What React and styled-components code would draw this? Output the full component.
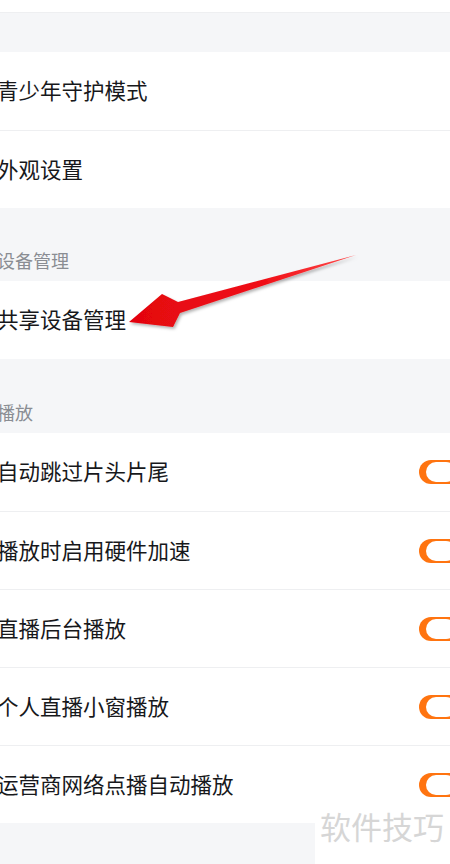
import React from "react"
import styled, { createGlobalStyle } from "styled-components"

const GlobalStyle = createGlobalStyle`
	html, body {
		margin: 0;
		padding: 0;
		background: #f5f6f8;
	}
	body {
		font-family: "Noto Sans CJK SC", "Noto Sans", sans-serif;
		overflow: hidden;
	}
`

const Page = styled.div`
	position: relative;
	width: 450px;
	height: 864px;
	overflow: hidden;
	background: #f5f6f8;
`

const TopStub = styled.div`
	height: 13px;
	background: #fff;
	border-bottom: 1px solid #eeeff1;
	box-sizing: border-box;
`

const Gap = styled.div`
	height: ${p => p.h}px;
`

const SectionHeader = styled.div`
	height: ${p => p.h}px;
	box-sizing: border-box;
	display: flex;
	align-items: flex-end;
	padding-bottom: 8px;
	margin-left: -3px;
	font-size: 18px;
	color: #8a8d93;
`

const Group = styled.div`
	background: #fff;
`

const Row = styled.div`
	height: 78px;
	box-sizing: border-box;
	display: flex;
	align-items: center;
	justify-content: space-between;
	padding-bottom: 3px;
	border-top: ${p => (p.first ? "none" : "1px solid #eeeff1")};
`

const Label = styled.span`
	margin-left: -3px;
	font-size: 21.5px;
	color: #17181b;
`

const Toggle = styled.div`
	position: relative;
	flex: none;
	width: 48px;
	height: 24px;
	margin-right: -17px;
	margin-top: 3px;
	border-radius: 12px;
	background: #ff7410;

	&::after {
		content: "";
		position: absolute;
		top: 2px;
		left: 7px;
		width: 30px;
		height: 20px;
		border-radius: 10px;
		background: #fff;
	}
`

const Arrow = styled.svg`
	position: absolute;
	left: 0;
	top: 0;
	pointer-events: none;
`

const Watermark = styled.div`
	position: absolute;
	left: 315px;
	top: 811px;
	width: 135px;
	height: 53px;
	box-sizing: border-box;
	padding-left: 5px;
	font-size: 31px;
	line-height: 30px;
	color: #d6d6d6;
	background: linear-gradient(#fff0 0, #fff0 9px, #fff 9px);
`

const Item = ({ label, toggle, first }) => (
	<Row first={first}>
		<Label>{label}</Label>
		{toggle && <Toggle />}
	</Row>
)

const playItems = [
	"自动跳过片头片尾",
	"播放时启用硬件加速",
	"直播后台播放",
	"个人直播小窗播放",
	"运营商网络点播自动播放",
]

export default function App() {
	return (
		<Page>
			<GlobalStyle />
			<TopStub />
			<Gap h={39} />
			<Group>
				<Item first label="青少年守护模式" />
				<Item label="外观设置" />
			</Group>
			<SectionHeader h={73}>设备管理</SectionHeader>
			<Group>
				<Item first label="共享设备管理" />
			</Group>
			<SectionHeader h={74}>播放</SectionHeader>
			<Group>
				{playItems.map((label, i) => (
					<Item key={label} first={i === 0} label={label} toggle />
				))}
			</Group>

			<Arrow width="450" height="864" viewBox="0 0 450 864">
				<defs>
					<linearGradient id="arrowFill" x1="0" y1="0" x2="1" y2="0">
						<stop offset="0" stopColor="#e3050f" />
						<stop offset="0.6" stopColor="#f01018" />
						<stop offset="1" stopColor="#ff4a4a" />
					</linearGradient>
					<filter id="arrowShadow" x="-10%" y="-30%" width="120%" height="160%">
						<feDropShadow dx="1.5" dy="2" stdDeviation="1.5" floodColor="#000" floodOpacity="0.3" />
					</filter>
				</defs>
				<polygon
					points="356,255 178,302 162,294 129,322 173,327 180,313"
					fill="url(#arrowFill)"
					filter="url(#arrowShadow)"
				/>
			</Arrow>

			<Watermark>软件技巧</Watermark>
		</Page>
	)
}
